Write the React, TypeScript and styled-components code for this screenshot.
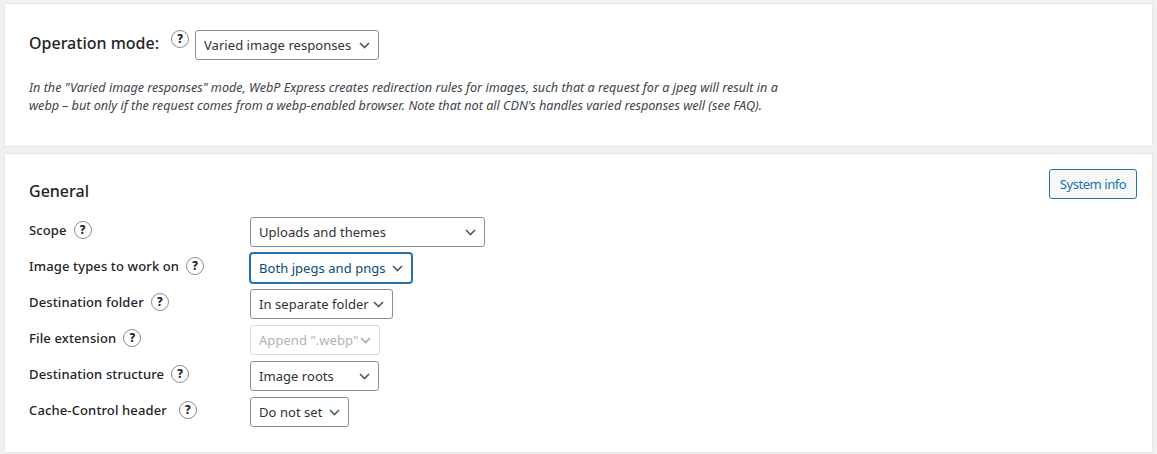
import React from "react";
import styled, { createGlobalStyle } from "styled-components";

const Global = createGlobalStyle`
  html, body { margin: 0; padding: 0; background: #f0f0f1; }
  body { font-family: "Noto Sans", "Open Sans", sans-serif; color: #1d2327; font-size: 13px; }
`;

const Page = styled.div`
  width: 1157px;
  height: 454px;
  box-sizing: border-box;
  padding: 3px 4px 0 4px;
  display: flex;
  flex-direction: column;
  gap: 6px;
  overflow: hidden;
`;

const Card = styled.section<{ $h: number }>`
  position: relative;
  height: ${(p) => p.$h}px;
  box-sizing: border-box;
  background: #fff;
  border: 1px solid #e3e7ea;
  padding: 0 25px 0 24px;
`;

const ModeRow = styled.div`
  display: flex;
  align-items: flex-start;
  padding-top: 26px;
  height: 31px;
`;

const ModeTitle = styled.h2`
  margin: 2px 0 0;
  font-size: 16px;
  line-height: 22px;
  font-weight: 500;
  color: #1d2327;
  width: 133px;
  white-space: nowrap;
`;

const HelpWrap = styled.span<{ $w?: number }>`
  display: inline-flex;
  flex: none;
  margin-left: ${(p) => p.$w ?? 0}px;
`;

const HelpCircle = styled.span`
  width: 16px;
  height: 16px;
  border: 1px solid #8a8f94;
  border-radius: 50%;
  background: #fff;
  display: flex;
  align-items: center;
  justify-content: center;
  font-size: 11.5px;
  font-weight: 800;
  line-height: 1;
  color: #1d2327;
`;

const Select = styled.div<{ $w: number; $disabled?: boolean; $focus?: boolean }>`
  width: ${(p) => p.$w}px;
  height: 30px;
  box-sizing: border-box;
  flex: none;
  display: flex;
  align-items: center;
  justify-content: space-between;
  padding: 0 8px;
  background: #fff;
  border-radius: 3px;
  border: 1px solid ${(p) => (p.$focus ? "#2271b1" : p.$disabled ? "#dcdcde" : "#8c8f94")};
  box-shadow: ${(p) => (p.$focus ? "0 0 0 1px #2271b1" : "none")};
  color: ${(p) => (p.$disabled ? "#b0b3b6" : p.$focus ? "#0a4b78" : "#2c3338")};
  font-size: 13px;
  letter-spacing: 0.05px;
  white-space: nowrap;
  overflow: hidden;
`;

const ModeSelect = styled(Select)`
  margin-left: 6px;
`;

const Chevron = styled.svg<{ $disabled?: boolean }>`
  width: 11px;
  height: 7px;
  flex: none;
  fill: none;
  stroke: ${(p) => (p.$disabled ? "#a7aaad" : "#50575e")};
  stroke-width: 1.6;
`;

const Note = styled.p`
  margin: 18px 0 0;
  width: 760px;
  font-size: 12.62px;
  line-height: 18px;
  font-style: italic;
  color: #3c434a;
`;

const GeneralTitle = styled.h2`
  margin: 0;
  padding-top: 26px;
  font-size: 16px;
  line-height: 22px;
  font-weight: 500;
`;

const InfoButton = styled.button`
  position: absolute;
  top: 15px;
  right: 15px;
  width: 88px;
  height: 30px;
  box-sizing: border-box;
  border: 1px solid #2271b1;
  border-radius: 3px;
  background: #f6f7f7;
  color: #2271b1;
  font-family: inherit;
  font-size: 13px;
  letter-spacing: -0.45px;
  padding: 0;
`;

const Rows = styled.div`
  margin-top: 15px;
  display: flex;
  flex-direction: column;
  gap: 6px;
`;

const Row = styled.div`
  display: flex;
  align-items: center;
  height: 30px;
`;

const LabelCell = styled.div`
  width: 221px;
  flex: none;
  display: flex;
  align-items: center;
  margin-top: -4px;
  font-size: 13px;
  font-weight: 500;
  letter-spacing: 0.13px;
  color: #1d2327;
`;

const Help = ({ gap }: { gap?: number }) => (
  <HelpWrap $w={gap}>
    <HelpCircle>?</HelpCircle>
  </HelpWrap>
);

const Arrow = ({ disabled }: { disabled?: boolean }) => (
  <Chevron viewBox="0 0 11 7" $disabled={disabled}>
    <path d="M1 1 L5.5 5.5 L10 1" />
  </Chevron>
);

const rows = [
  { label: "Scope", gap: 7, value: "Uploads and themes", w: 235 },
  { label: "Image types to work on", gap: 7, value: "Both jpegs and pngs", w: 162, focus: true },
  { label: "Destination folder", gap: 7, value: "In separate folder", w: 143 },
  { label: "File extension", gap: 7, value: 'Append ".webp"', w: 130, disabled: true },
  { label: "Destination structure", gap: 7, value: "Image roots", w: 129 },
  { label: "Cache-Control header", gap: 12, value: "Do not set", w: 99 },
];

export default function App() {
  return (
    <Page>
      <Global />
      <Card $h={144}>
        <ModeRow>
          <ModeTitle>Operation mode:</ModeTitle>
          <Help gap={9} />
          <ModeSelect $w={184}>
            Varied image responses
            <Arrow />
          </ModeSelect>
        </ModeRow>
        <Note>
          In the "Varied image responses" mode, WebP Express creates redirection rules for images, such that a request for a jpeg will result in a webp – but only if the request comes from a webp-enabled browser. Note that not all CDN's handles varied responses well (see FAQ).
        </Note>
      </Card>
      <Card $h={300}>
        <GeneralTitle>General</GeneralTitle>
        <InfoButton>System info</InfoButton>
        <Rows>
          {rows.map((r) => (
            <Row key={r.label}>
              <LabelCell>
                {r.label}
                <Help gap={r.gap} />
              </LabelCell>
              <Select $w={r.w} $focus={r.focus} $disabled={r.disabled}>
                {r.value}
                <Arrow disabled={r.disabled} />
              </Select>
            </Row>
          ))}
        </Rows>
      </Card>
    </Page>
  );
}
